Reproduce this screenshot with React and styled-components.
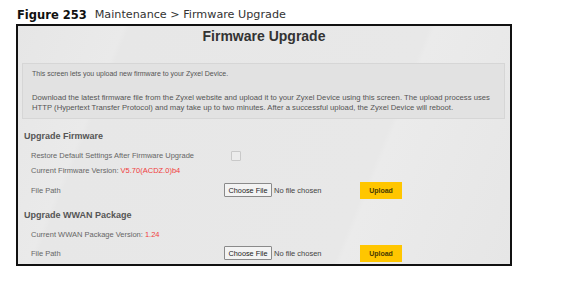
import React from "react";
import styled, { createGlobalStyle } from "styled-components";

const Global = createGlobalStyle`
  html, body { margin: 0; padding: 0; background: #fff; }
  body { font-family: "Liberation Sans", Arial, sans-serif; }
`;

const Page = styled.div`
  width: 564px;
  height: 293px;
  padding: 9px 0 0 16px;
  box-sizing: border-box;
`;

const Caption = styled.div`
  display: flex;
  align-items: center;
  height: 12px;
  padding-left: 1px;
  line-height: 12px;
  white-space: nowrap;
`;

const CaptionNum = styled.span`
  font-family: "DejaVu Sans", sans-serif;
  font-weight: bold;
  font-size: 11.5px;
  color: #111;
  margin-right: 8px;
`;

const CaptionText = styled.span`
  font-family: "DejaVu Sans", sans-serif;
  font-size: 11.2px;
  color: #333;
`;

const Frame = styled.div`
  margin-top: 3px;
  width: 496px;
  height: 242px;
  box-sizing: border-box;
  border: 2px solid #111;
  background: linear-gradient(
    112deg,
    #e6e6e6 0%,
    #eaeaea 18%,
    #e7e7e7 19%,
    #e8e8e8 70%,
    #ebebeb 71%,
    #e6e6e6 100%
  );
  display: flex;
  flex-direction: column;
`;

const Title = styled.div`
  height: 20px;
  line-height: 20px;
  text-align: center;
  font-weight: bold;
  font-size: 14px;
  color: #333;
`;

const InfoBox = styled.div`
  margin: 17px 5px 0 4px;
  padding: 5px 9px 5px 9px;
  border: 1px solid #d6d6d6;
  background: #e2e2e2;
  display: flex;
  flex-direction: column;
  gap: 14px;
`;

const Para = styled.p`
  margin: 0;
  font-size: ${(p) => p.$fs || 7.5}px;
  line-height: 10px;
  color: #555;
  white-space: nowrap;
`;

const SectionTitle = styled.div`
  margin-top: ${(p) => p.$mt}px;
  padding-left: 6px;
  height: 14px;
  line-height: 14px;
  font-weight: bold;
  font-size: 9px;
  color: #555;
`;

const Row = styled.div`
  display: flex;
  align-items: center;
  height: ${(p) => p.$h}px;
  margin-top: ${(p) => p.$mt || 0}px;
  padding-left: 13px;
`;

const Label = styled.div`
  width: 193px;
  font-size: 7.5px;
  color: #666;
  white-space: nowrap;
`;

const Inline = styled.div`
  font-size: 7.5px;
  color: #666;
  white-space: nowrap;
`;

const Red = styled.span`
  color: #f03c3c;
`;

const Check = styled.span`
  display: block;
  margin-left: 7px;
  width: 8px;
  height: 8px;
  border: 1px solid #c9c9c9;
  border-radius: 1px;
  background: #ececec;
`;

const FileBox = styled.div`
  display: flex;
  align-items: center;
  width: 136px;
`;

const ChooseBtn = styled.span`
  display: flex;
  align-items: center;
  justify-content: center;
  width: 48px;
  height: 14px;
  box-sizing: border-box;
  border: 1px solid #8a8a8a;
  border-radius: 1px;
  background: #f3f3f3;
  font-size: 7.3px;
  color: #222;
`;

const NoFile = styled.span`
  margin-left: 2px;
  font-size: 7.5px;
  color: #444;
`;

const Upload = styled.span`
  display: flex;
  align-items: center;
  justify-content: center;
  width: 42px;
  height: 17px;
  background: #ffc600;
  font-size: 7px;
  font-weight: bold;
  color: #4a3b00;
`;

function FileRow({ mt }) {
  return (
    <Row $h={20} $mt={mt}>
      <Label>File Path</Label>
      <FileBox>
        <ChooseBtn>Choose File</ChooseBtn>
        <NoFile>No file chosen</NoFile>
      </FileBox>
      <Upload>Upload</Upload>
    </Row>
  );
}

export default function App() {
  return (
    <>
      <Global />
      <Page>
        <Caption>
          <CaptionNum>Figure 253</CaptionNum>
          <CaptionText>Maintenance &gt; Firmware Upgrade</CaptionText>
        </Caption>
        <Frame>
          <Title>Firmware Upgrade</Title>
          <InfoBox>
            <Para $fs={7}>This screen lets you upload new firmware to your Zyxel Device.</Para>
            <Para $fs={7.7}>
              Download the latest firmware file from the Zyxel website and upload it to your Zyxel Device using this screen. The upload process uses
              <br />
              HTTP (Hypertext Transfer Protocol) and may take up to two minutes. After a successful upload, the Zyxel Device will reboot.
            </Para>
          </InfoBox>
          <SectionTitle $mt={10}>Upgrade Firmware</SectionTitle>
          <Row $h={15} $mt={5}>
            <Label>Restore Default Settings After Firmware Upgrade</Label>
            <Check />
          </Row>
          <Row $h={15}>
            <Inline>
              Current Firmware Version: <Red>V5.70(ACDZ.0)b4</Red>
            </Inline>
          </Row>
          <FileRow mt={2} />
          <SectionTitle $mt={8}>Upgrade WWAN Package</SectionTitle>
          <Row $h={15} $mt={5}>
            <Inline>
              Current WWAN Package Version: <Red>1.24</Red>
            </Inline>
          </Row>
          <FileRow mt={1} />
        </Frame>
      </Page>
    </>
  );
}
